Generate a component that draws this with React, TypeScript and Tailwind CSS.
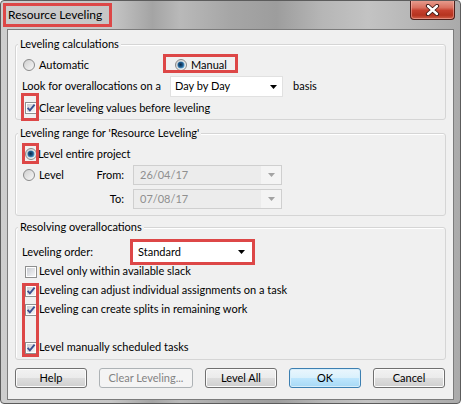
import type { ReactNode } from 'react'

function RadioDot({ checked = false }: { checked?: boolean }) {
  return (
    <svg width="12" height="12" viewBox="0 0 12 12" className="shrink-0">
      <defs>
        <linearGradient id="radio-face" x1="0" y1="0" x2="1" y2="1">
          <stop offset="0" stopColor="#cdcdcd" />
          <stop offset="1" stopColor="#fafafa" />
        </linearGradient>
        <radialGradient id="radio-dot" cx="0.45" cy="0.45" r="0.6">
          <stop offset="0" stopColor="#0b2744" />
          <stop offset="0.55" stopColor="#1f5b8e" />
          <stop offset="1" stopColor="#79c2ec" />
        </radialGradient>
      </defs>
      <circle cx="6" cy="6" r="5.5" fill="url(#radio-face)" stroke="#8a8a8a" />
      {checked && <circle cx="6" cy="6" r="3.6" fill="url(#radio-dot)" />}
    </svg>
  )
}

function CheckBox({ checked = false }: { checked?: boolean }) {
  return (
    <svg width="12" height="12" viewBox="0 0 12 12" className="shrink-0">
      <defs>
        <linearGradient id="check-face" x1="0" y1="0" x2="1" y2="1">
          <stop offset="0" stopColor="#c9ccd2" />
          <stop offset="1" stopColor="#f4f5f6" />
        </linearGradient>
      </defs>
      <rect x="0.5" y="0.5" width="11" height="11" fill="#fff" stroke="#8e8f8f" />
      <rect x="2" y="2" width="8" height="8" fill="url(#check-face)" />
      {checked && (
        <path d="M2.6 5.8 L4.9 8.4 L9.6 2.6" fill="none" stroke="#3d5190" strokeWidth="1.9" />
      )}
    </svg>
  )
}

function Caret({ color = '#000' }: { color?: string }) {
  return (
    <svg width="7" height="4" viewBox="0 0 7 4" className="shrink-0">
      <path d="M0 0h7L3.5 4z" fill={color} />
    </svg>
  )
}

// red callout frame drawn over a control
function Mark({ className }: { className: string }) {
  return (
    <span
      className={`pointer-events-none absolute border-[3px] border-[#dd4747] ${className}`}
    />
  )
}

function Group({
  title,
  className,
  children,
}: {
  title: string
  className: string
  children: ReactNode
}) {
  return (
    <div
      className={`border border-[#d5d5d5] rounded-[3px] shadow-[inset_1px_1px_0_#fff] ${className}`}
    >
      <div className="-mt-[9px] ml-[2px] w-fit h-[16px] leading-[16px] px-[2px] bg-[#f0f0f0]">
        {title}
      </div>
      {children}
    </div>
  )
}

function DateBox({ value }: { value: string }) {
  return (
    <div className="ml-[9px] w-[149px] h-[20px] border border-[#cfcfcf] bg-[#ececec] flex">
      <span className="flex-1 flex items-center pl-[6px] text-[#8f8f8f]">{value}</span>
      <span className="w-[20px] bg-[#f4f4f4] flex items-center justify-center">
        <Caret color="#a3a3a3" />
      </span>
    </div>
  )
}

function CheckRow({ checked, label }: { checked?: boolean; label?: string }) {
  return (
    <div className="h-[19px] flex items-center pl-[9px] gap-[2px]">
      {label && <CheckBox checked={checked} />}
      {label}
    </div>
  )
}

function Button({
  children,
  className,
  kind = 'normal',
}: {
  children: ReactNode
  className: string
  kind?: 'normal' | 'default' | 'disabled'
}) {
  const look =
    kind === 'default'
      ? 'border-[#3c7fb1] bg-[linear-gradient(#eaf6fd_0%,#d9f0fc_50%,#bee6fd_51%,#a7d9f5_100%)] shadow-[inset_0_0_0_1px_#d6eefb]'
      : kind === 'disabled'
        ? 'border-[#adb2b5] bg-[#f4f4f4] text-[#838383]'
        : 'border-[#707070] bg-[linear-gradient(#f2f2f2_0%,#ebebeb_50%,#dddddd_51%,#cfcfcf_100%)] shadow-[inset_0_0_0_1px_#fcfcfc]'
  return (
    <button
      className={`h-[20px] rounded-[3px] border flex items-center justify-center ${look} ${className}`}
    >
      {children}
    </button>
  )
}

function CloseButton() {
  return (
    <div className="-mt-[1px] mr-[5px] w-[45px] h-[20px] rounded-b-[4px] border border-t-0 border-[#4e1f1a] bg-[linear-gradient(#e8a193_0%,#d9705f_40%,#c5402e_55%,#b6331f_80%,#d0604a_100%)] shadow-[inset_0_0_0_1px_rgba(255,200,190,0.45)] flex items-center justify-center">
      <svg width="15" height="12" viewBox="0 0 15 12">
        <path d="M3 2 L12 10 M12 2 L3 10" stroke="#3a1512" strokeWidth="4.2" strokeLinecap="round" />
        <path d="M3 2 L12 10 M12 2 L3 10" stroke="#fff" strokeWidth="2.4" strokeLinecap="round" />
      </svg>
    </div>
  )
}

export default function App() {
  return (
    <div className="w-[461px] h-[404px] flex flex-col overflow-hidden border border-[#5c5c5c] rounded-[4px] bg-[linear-gradient(90deg,#cdcdcd_0%,#c6c6c6_24%,#a4a4a4_33%,#b9b9b9_39%,#a6a6a6_50%,#9d9d9d_60%,#b6b6b6_70%,#c3c3c3_80%,#aaaaaa_100%)] text-[11px] text-black font-['Lato',sans-serif]">
      {/* title bar */}
      <div className="h-[28px] shrink-0 flex items-start justify-between">
        <div className="ml-[2px] mt-[2px] h-[24px] w-[109px] border-[3px] border-[#dd4747] flex items-center pl-[2px] text-[12px]">
          Resource Leveling
        </div>
        <CloseButton />
      </div>

      {/* client area */}
      <div className="mx-[6px] h-[371px] shrink-0 border border-[#7b7b7b] bg-[#f0f0f0] flex flex-col px-[7px]">
        <Group title="Leveling calculations" className="mt-[14px] pb-[2px]">
          <div className="mt-[4px] h-[18px] flex items-center pl-[7px]">
            <label className="w-[152px] flex items-center gap-[4px]">
              <RadioDot />
              Automatic
            </label>
            <span className="relative h-[18px] flex items-center gap-[4px]">
              <RadioDot checked />
              Manual
              <Mark className="-left-[12px] -top-[2px] w-[75px] h-[19px]" />
            </span>
          </div>
          <div className="mt-[2px] h-[21px] flex items-center pl-[6px]">
            <span className="w-[148px]">Look for overallocations on a</span>
            <div className="w-[113px] h-[21px] bg-white border border-[#e1e1e1] flex items-center justify-between pl-[4px] pr-[5px]">
              <span>Day by Day</span>
              <Caret />
            </div>
            <span className="ml-[10px]">basis</span>
          </div>
          <div className="mt-[2px] h-[18px] flex items-center pl-[9px] gap-[2px]">
            <span className="relative flex">
              <CheckBox checked />
              <Mark className="-left-[4px] -top-[9px] w-[18px] h-[28px]" />
            </span>
            Clear leveling values before leveling
          </div>
        </Group>

        <Group title="Leveling range for 'Resource Leveling'" className="mt-[13px] pb-[6px]">
          <div className="mt-[4px] h-[18px] flex items-center pl-[9px] gap-[1px]">
            <span className="relative flex">
              <RadioDot checked />
              <Mark className="-left-[3px] -top-[5px] w-[17px] h-[21px]" />
            </span>
            Level entire project
          </div>
          <div className="mt-[2px] h-[20px] flex items-center pl-[7px]">
            <label className="w-[72px] flex items-center gap-[4px]">
              <RadioDot />
              Level
            </label>
            <span className="w-[29px] text-right">From:</span>
            <DateBox value="26/04/17" />
          </div>
          <div className="mt-[4px] h-[20px] flex items-center pl-[79px]">
            <span className="w-[29px] text-right">To:</span>
            <DateBox value="07/08/17" />
          </div>
        </Group>

        <Group title="Resolving overallocations" className="mt-[11px] pb-[2px]">
          <div className="mt-[7px] h-[20px] flex items-center pl-[6px]">
            <span className="w-[111px]">Leveling order:</span>
            <div className="relative w-[119px] h-[20px] bg-white flex items-center justify-between pl-[5px] pr-[7px]">
              <span>Standard</span>
              <Caret />
              <Mark className="-left-[3px] -top-[3px] w-[125px] h-[26px]" />
            </div>
          </div>
          <div className="relative">
            <CheckRow label="Level only within available slack" />
            <CheckRow checked label="Leveling can adjust individual assignments on a task" />
            <CheckRow checked label="Leveling can create splits in remaining work" />
            <CheckRow />
            <CheckRow checked label="Level manually scheduled tasks" />
            <Mark className="left-[6px] top-[21px] w-[17px] h-[74px]" />
          </div>
        </Group>

        <div className="mt-[8px] flex gap-[12px]">
          <Button className="w-[72px]">Help</Button>
          <Button className="w-[94px]" kind="disabled">
            Clear Leveling...
          </Button>
          <Button className="w-[72px]">Level All</Button>
          <Button className="w-[72px]" kind="default">
            OK
          </Button>
          <Button className="w-[72px]">Cancel</Button>
        </div>
      </div>
    </div>
  )
}
